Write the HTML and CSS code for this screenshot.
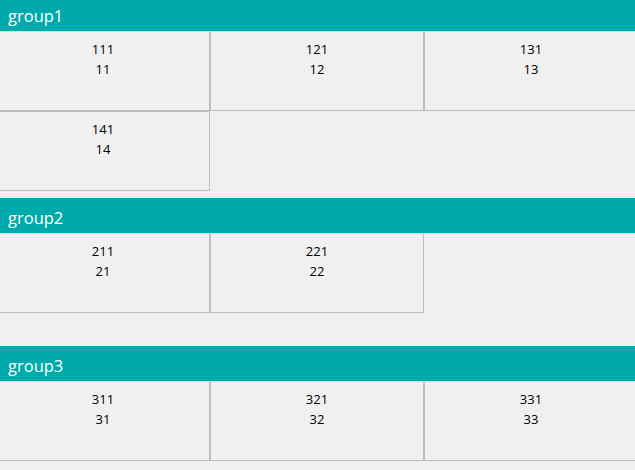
FILE: index.html
```html
<!DOCTYPE html>
<html>
<head>
<meta charset="utf-8">
<link rel="stylesheet" href="styles.css">
</head>
<body>
<div class="page">
  <section class="group">
    <div class="header">group1</div>
    <div class="cells">
      <div class="cell"><div>111</div><div>11</div></div>
      <div class="cell"><div>121</div><div>12</div></div>
      <div class="cell"><div>131</div><div>13</div></div>
      <div class="cell"><div>141</div><div>14</div></div>
    </div>
  </section>
  <section class="group group-tall">
    <div class="header">group2</div>
    <div class="cells">
      <div class="cell"><div>211</div><div>21</div></div>
      <div class="cell"><div>221</div><div>22</div></div>
    </div>
  </section>
  <section class="group">
    <div class="header">group3</div>
    <div class="cells">
      <div class="cell"><div>311</div><div>31</div></div>
      <div class="cell"><div>321</div><div>32</div></div>
      <div class="cell"><div>331</div><div>33</div></div>
    </div>
  </section>
</div>
</body>
</html>
```
FILE: styles.css
```css
html, body {
  margin: 0;
  padding: 0;
  background: #f0f0f0;
  overflow: hidden;
}
body {
  width: 635px;
  height: 470px;
  font-family: "Open Sans", "Noto Sans", sans-serif;
  color: #000;
}
.page {
  margin: -4px 0 0 -4px;
  width: 650px;
}
.group {
  margin-bottom: 7px;
}
.group-tall {
  margin-bottom: 33px;
}
.header {
  position: relative;
  z-index: 1;
  box-sizing: border-box;
  height: 36px;
  background: #00aaaa;
  border-bottom: 1px solid #cfe0e0;
  color: #fff;
  font-size: 16.5px;
  line-height: 30px;
  padding: 5px 0 0 12px;
}
.cells {
  display: grid;
  grid-template-columns: repeat(3, 214px);
  margin-top: -1px;
}
.cell {
  box-sizing: border-box;
  height: 80px;
  border: 1px solid #bebebe;
  text-align: center;
  font-size: 13px;
  line-height: 20px;
  padding-top: 7px;
}
```
